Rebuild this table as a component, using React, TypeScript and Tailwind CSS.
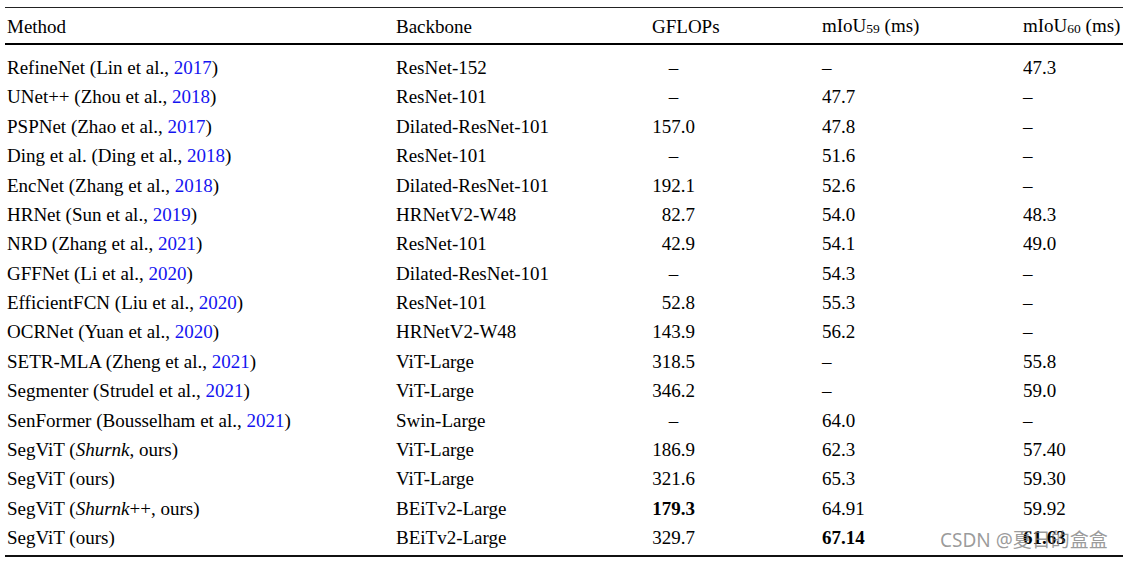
import React from "react"

type Row = {
  method: React.ReactNode
  year: string
  backbone: string
  gflops: string
  m59: string
  m60: string
  bold?: "gflops" | "m59" | "m60s"
}

const rows: Row[] = [
  { method: "RefineNet (Lin et al., ", year: "2017", backbone: "ResNet-152", gflops: "–", m59: "–", m60: "47.3" },
  { method: "UNet++ (Zhou et al., ", year: "2018", backbone: "ResNet-101", gflops: "–", m59: "47.7", m60: "–" },
  { method: "PSPNet (Zhao et al., ", year: "2017", backbone: "Dilated-ResNet-101", gflops: "157.0", m59: "47.8", m60: "–" },
  { method: "Ding et al. (Ding et al., ", year: "2018", backbone: "ResNet-101", gflops: "–", m59: "51.6", m60: "–" },
  { method: "EncNet (Zhang et al., ", year: "2018", backbone: "Dilated-ResNet-101", gflops: "192.1", m59: "52.6", m60: "–" },
  { method: "HRNet (Sun et al., ", year: "2019", backbone: "HRNetV2-W48", gflops: "82.7", m59: "54.0", m60: "48.3" },
  { method: "NRD (Zhang et al., ", year: "2021", backbone: "ResNet-101", gflops: "42.9", m59: "54.1", m60: "49.0" },
  { method: "GFFNet (Li et al., ", year: "2020", backbone: "Dilated-ResNet-101", gflops: "–", m59: "54.3", m60: "–" },
  { method: "EfficientFCN (Liu et al., ", year: "2020", backbone: "ResNet-101", gflops: "52.8", m59: "55.3", m60: "–" },
  { method: "OCRNet (Yuan et al., ", year: "2020", backbone: "HRNetV2-W48", gflops: "143.9", m59: "56.2", m60: "–" },
  { method: "SETR-MLA (Zheng et al., ", year: "2021", backbone: "ViT-Large", gflops: "318.5", m59: "–", m60: "55.8" },
  { method: "Segmenter (Strudel et al., ", year: "2021", backbone: "ViT-Large", gflops: "346.2", m59: "–", m60: "59.0" },
  { method: "SenFormer (Bousselham et al., ", year: "2021", backbone: "Swin-Large", gflops: "–", m59: "64.0", m60: "–" },
]

const ours: Row[] = [
  {
    method: (
      <>
        SegViT (<i>Shurnk</i>, ours)
      </>
    ),
    year: "",
    backbone: "ViT-Large",
    gflops: "186.9",
    m59: "62.3",
    m60: "57.40",
  },
  { method: "SegViT (ours)", year: "", backbone: "ViT-Large", gflops: "321.6", m59: "65.3", m60: "59.30" },
  {
    method: (
      <>
        SegViT (<i>Shurnk</i>++, ours)
      </>
    ),
    year: "",
    backbone: "BEiTv2-Large",
    gflops: "179.3",
    m59: "64.91",
    m60: "59.92",
    bold: "gflops",
  },
  { method: "SegViT (ours)", year: "", backbone: "BEiTv2-Large", gflops: "329.7", m59: "67.14", m60: "61.63", bold: "m59" },
]

const cols = "grid grid-cols-[389px_256px_170px_201px_1fr]"

function Gflops({ v, bold }: { v: string; bold?: boolean }) {
  // numbers flush right in a 43px box, dashes centred
  return (
    <div className={`w-[43px] ${v === "–" ? "text-center" : "text-right"} ${bold ? "font-bold" : ""}`}>{v}</div>
  )
}

function TableRow({ r, last }: { r: Row; last?: boolean }) {
  return (
    <div className={`${cols} h-[29.375px] leading-[29.375px]`}>
      <div className="whitespace-nowrap">
        {r.method}
        {r.year && (
          <>
            <span className="text-[#1414f0]">{r.year}</span>)
          </>
        )}
      </div>
      <div>{r.backbone}</div>
      <Gflops v={r.gflops} bold={r.bold === "gflops"} />
      <div className={r.bold === "m59" ? "font-bold" : ""}>{r.m59}</div>
      <div className={last ? "font-bold" : ""}>{r.m60}</div>
    </div>
  )
}

export default function App() {
  const all = [...rows, ...ours]
  return (
    <div
      className="relative w-[1127px] h-[562px] bg-white text-black overflow-hidden text-[19px]"
      style={{ fontFamily: '"Liberation Serif", "Times New Roman", serif' }}
    >
      <div className="ml-[5px] w-[1118px] pt-[7px]">
        <div className="border-t border-[#222]" />
        <div className={`${cols} h-[35px] items-center pl-[2px] pt-[1px] leading-[21px]`}>
          <div>Method</div>
          <div>Backbone</div>
          <div>GFLOPs</div>
          <div className="whitespace-nowrap">
            mIoU<span className="relative top-[1.5px] text-[13.5px]">59</span> (ms)
          </div>
          <div className="whitespace-nowrap">
            mIoU<span className="relative top-[1.5px] text-[13.5px]">60</span> (ms)
          </div>
        </div>
        <div className="border-t-2 border-black" />
        <div className="pt-[8px] pb-[3px] pl-[2px]">
          {all.map((r, i) => (
            <TableRow key={i} r={r} last={i === all.length - 1} />
          ))}
        </div>
        <div className="border-t-2 border-[#111]" />
      </div>

      <div
        className="absolute left-[940px] top-[526px] text-[19px] leading-[28px] text-[#7a7a7a]/75 whitespace-nowrap"
        style={{ fontFamily: '"Noto Sans", "Noto Sans CJK SC", sans-serif' }}
      >
        CSDN @夏日的盒盒
      </div>
    </div>
  )
}
